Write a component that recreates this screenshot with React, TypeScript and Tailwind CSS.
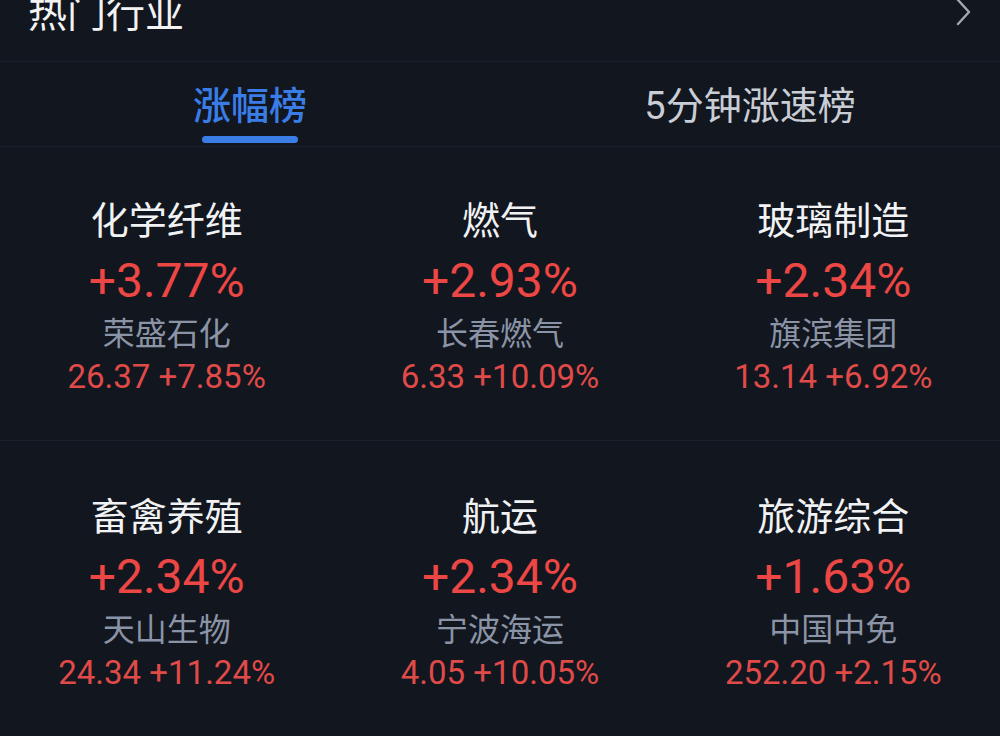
import React from 'react';

type Sector = {
  name: string;
  change: string;
  stock: string;
  price: string;
  stockChange: string;
};

const sectors: Sector[] = [
  { name: '化学纤维', change: '+3.77%', stock: '荣盛石化', price: '26.37', stockChange: '+7.85%' },
  { name: '燃气', change: '+2.93%', stock: '长春燃气', price: '6.33', stockChange: '+10.09%' },
  { name: '玻璃制造', change: '+2.34%', stock: '旗滨集团', price: '13.14', stockChange: '+6.92%' },
  { name: '畜禽养殖', change: '+2.34%', stock: '天山生物', price: '24.34', stockChange: '+11.24%' },
  { name: '航运', change: '+2.34%', stock: '宁波海运', price: '4.05', stockChange: '+10.05%' },
  { name: '旅游综合', change: '+1.63%', stock: '中国中免', price: '252.20', stockChange: '+2.15%' },
];

const font = "font-['Roboto','Noto_Sans_CJK_SC',sans-serif]";

function SectorCell({ s }: { s: Sector }) {
  return (
    <div className="flex flex-col items-center pt-[52px]">
      <div className="text-[38px] leading-[44px] text-[#f1f2f4]">{s.name}</div>
      <div className="mt-[13px] text-[48px] leading-[50px] text-[#ec4744]">{s.change}</div>
      <div className="mt-[8px] text-[32px] leading-[40px] text-[#8b94a7]">{s.stock}</div>
      <div className="mt-[5px] text-[33px] leading-[36px] text-[#e04a48]">
        {s.price} {s.stockChange}
      </div>
    </div>
  );
}

export default function App() {
  return (
    <div className={`h-[736px] w-[1000px] overflow-hidden bg-[#12161e] ${font}`}>
      {/* section header */}
      <div className="flex h-[62px] items-start justify-between border-b border-[#1b1f29] pl-[28px] pr-[26px]">
        <div className="-mt-[5px] text-[39px] leading-[38px] text-[#f3f3f3]">热门行业</div>
        <svg width="20" height="30" viewBox="0 0 20 30" className="-mt-[2px]">
          <polyline points="4,2 15,14 4,26" fill="none" stroke="#a3a7b0" strokeWidth="2.4" strokeLinecap="round" strokeLinejoin="round" />
        </svg>
      </div>

      {/* tabs */}
      <div className="grid h-[85px] grid-cols-2 border-b border-[#1b1f29]">
        <div className="flex flex-col items-center pt-[22px]">
          <div className="text-[38px] leading-[44px] font-medium text-[#3a7de6]">涨幅榜</div>
          <div className="mt-[8px] h-[7px] w-[96px] rounded-full bg-[#3a7de6]" />
        </div>
        <div className="flex flex-col items-center pt-[22px]">
          <div className="text-[38px] leading-[44px] text-[#c9cdd6]">5分钟涨速榜</div>
        </div>
      </div>

      {/* sector grid */}
      <div className="grid h-[294px] grid-cols-3 border-b border-[#1b1f29]">
        {sectors.slice(0, 3).map(s => (
          <SectorCell key={s.name} s={s} />
        ))}
      </div>
      <div className="grid grid-cols-3 pt-[2px]">
        {sectors.slice(3).map(s => (
          <SectorCell key={s.name} s={s} />
        ))}
      </div>
    </div>
  );
}
